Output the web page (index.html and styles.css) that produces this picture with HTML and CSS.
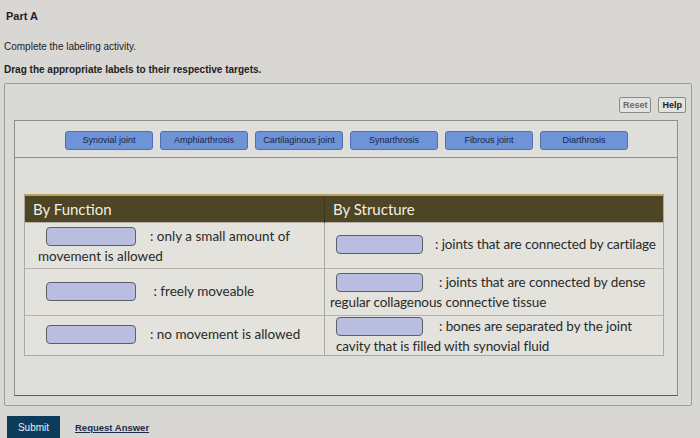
FILE: index.html
```html
<!DOCTYPE html>
<html lang="en">
<head>
    <meta charset="UTF-8">
    <meta name="viewport" content="width=device-width, initial-scale=1.0">
    <title>Part A - Labeling Activity</title>
    <link rel="stylesheet" href="styles.css">
</head>
<body>
    <div class="page">
        <h2 class="part-title">Part A</h2>
        <p class="intro">Complete the labeling activity.</p>
        <p class="instructions">Drag the appropriate labels to their respective targets.</p>

        <div class="activity">
            <div class="toolbar">
                <button class="tool-btn reset">Reset</button>
                <button class="tool-btn help">Help</button>
            </div>
            <div class="board">
                <div class="bank">
                    <div class="label">Synovial joint</div>
                    <div class="label">Amphiarthrosis</div>
                    <div class="label">Cartilaginous joint</div>
                    <div class="label">Synarthrosis</div>
                    <div class="label">Fibrous joint</div>
                    <div class="label">Diarthrosis</div>
                </div>
                <div class="table-wrap">
                    <table class="joints">
                        <thead>
                            <tr>
                                <th class="col-function">By Function</th>
                                <th>By Structure</th>
                            </tr>
                        </thead>
                        <tbody>
                            <tr class="row-1">
                                <td class="left"><span class="target"></span>: only a small amount of<br>movement is allowed</td>
                                <td class="right"><span class="target"></span>: joints that are connected by cartilage</td>
                            </tr>
                            <tr class="row-2">
                                <td class="left"><span class="target"></span> : freely moveable</td>
                                <td class="right"><span class="target wide"></span>: joints that are connected by dense<br>regular collagenous connective tissue</td>
                            </tr>
                            <tr class="row-3">
                                <td class="left"><span class="target"></span>: no movement is allowed</td>
                                <td class="right"><span class="target wide"></span>: bones are separated by the joint<br><span class="indent">cavity that is filled with synovial fluid</span></td>
                            </tr>
                        </tbody>
                    </table>
                </div>
            </div>
        </div>

        <div class="actions">
            <button class="submit">Submit</button>
            <a href="#" class="request">Request Answer</a>
        </div>
    </div>
</body>
</html>
```

FILE: styles.css
```css
body {
    margin: 0;
    background-color: #d8d7d3;
    font-family: "Liberation Sans", Arial, sans-serif;
    color: #222222;
    overflow: hidden;
}
.page {
    padding: 9px 8px 0 4px;
}
.part-title {
    margin: 0 0 0 2px;
    font-size: 11px;
    line-height: 14px;
    font-weight: bold;
}
.intro {
    margin: 17px 0 0;
    font-size: 10px;
    line-height: 14px;
}
.instructions {
    margin: 9px 0 0;
    font-size: 10px;
    line-height: 14px;
    font-weight: bold;
}
.activity {
    margin-top: 6px;
    height: 323px;
    box-sizing: border-box;
    border: 1px solid #9c9b97;
    border-radius: 2px;
    background: #d9d9d5;
}
.toolbar {
    display: flex;
    justify-content: flex-end;
    gap: 7px;
    padding: 13px 5px 0 0;
}
.tool-btn {
    height: 16px;
    padding: 0 3px;
    border: 1px solid #8a8a88;
    border-radius: 2px;
    background: #e2e2df;
    font-family: "Liberation Sans", Arial, sans-serif;
    font-size: 9px;
    font-weight: bold;
    color: #222222;
}
.tool-btn.reset {
    color: #6a6a6a;
}
.board {
    margin: 7px 13px 0 9px;
    height: 276px;
    box-sizing: border-box;
    border: 1px solid #8f8e8a;
    border-bottom-color: #5e5d5a;
    background: #dededa;
}
.bank {
    display: flex;
    gap: 7px;
    padding: 10px 0 7px 50px;
    border-bottom: 1px solid #8f8e8a;
}
.label {
    width: 88px;
    height: 19px;
    box-sizing: border-box;
    border: 1px solid #5070b0;
    border-radius: 3px;
    background: #6e93d6;
    color: #18244a;
    font-size: 9px;
    line-height: 17px;
    text-align: center;
}
.table-wrap {
    padding: 36px 13px 0 9px;
}
.joints {
    width: 100%;
    border-collapse: collapse;
    border: 1px solid #aaa89f;
    font-family: Lato, "Open Sans", sans-serif;
    font-size: 13.5px;
    color: #2a2a28;
}
.joints th {
    height: 26px;
    padding: 0 8px;
    border-top: 2px solid #b8a35c;
    background: #4d4524;
    color: #f1eee2;
    font-size: 15px;
    font-weight: normal;
    text-align: left;
}
.joints th.col-function {
    width: 283px;
    border-right: 1px solid #3a3420;
}
.joints td {
    vertical-align: middle;
    line-height: 17px;
    background: #e3e2dc;
    border-top: 1px solid #b3b1a9;
}
.joints td.left {
    padding: 0 10px 0 13px;
    border-right: 1px solid #aaa89f;
}
.joints td.right {
    padding: 0 2px 0 5px;
    white-space: nowrap;
    letter-spacing: -0.1px;
}
.row-1 td {
    height: 45px;
}
.row-2 td {
    height: 46px;
}
.row-3 td {
    height: 39px;
}
.target {
    display: inline-block;
    width: 90px;
    height: 19px;
    box-sizing: border-box;
    margin: 0 14px 2px 8px;
    border: 1px solid #5d5e68;
    border-radius: 4px;
    background: #b9bde0;
    vertical-align: middle;
}
.right .target {
    width: 87px;
    margin: 0 12px 2px 6px;
}
.right .target.wide {
    margin-right: 16px;
}
.indent {
    padding-left: 6px;
}
.actions {
    display: flex;
    align-items: center;
    gap: 15px;
    margin-top: 10px;
    padding-left: 3px;
}
.submit {
    width: 53px;
    height: 22px;
    border: none;
    background: #0c3c5a;
    color: #e8eef2;
    font-family: "Liberation Sans", Arial, sans-serif;
    font-size: 10px;
}
.request {
    color: #1c2c48;
    font-size: 9.5px;
    font-weight: bold;
    text-decoration: underline;
}
```
